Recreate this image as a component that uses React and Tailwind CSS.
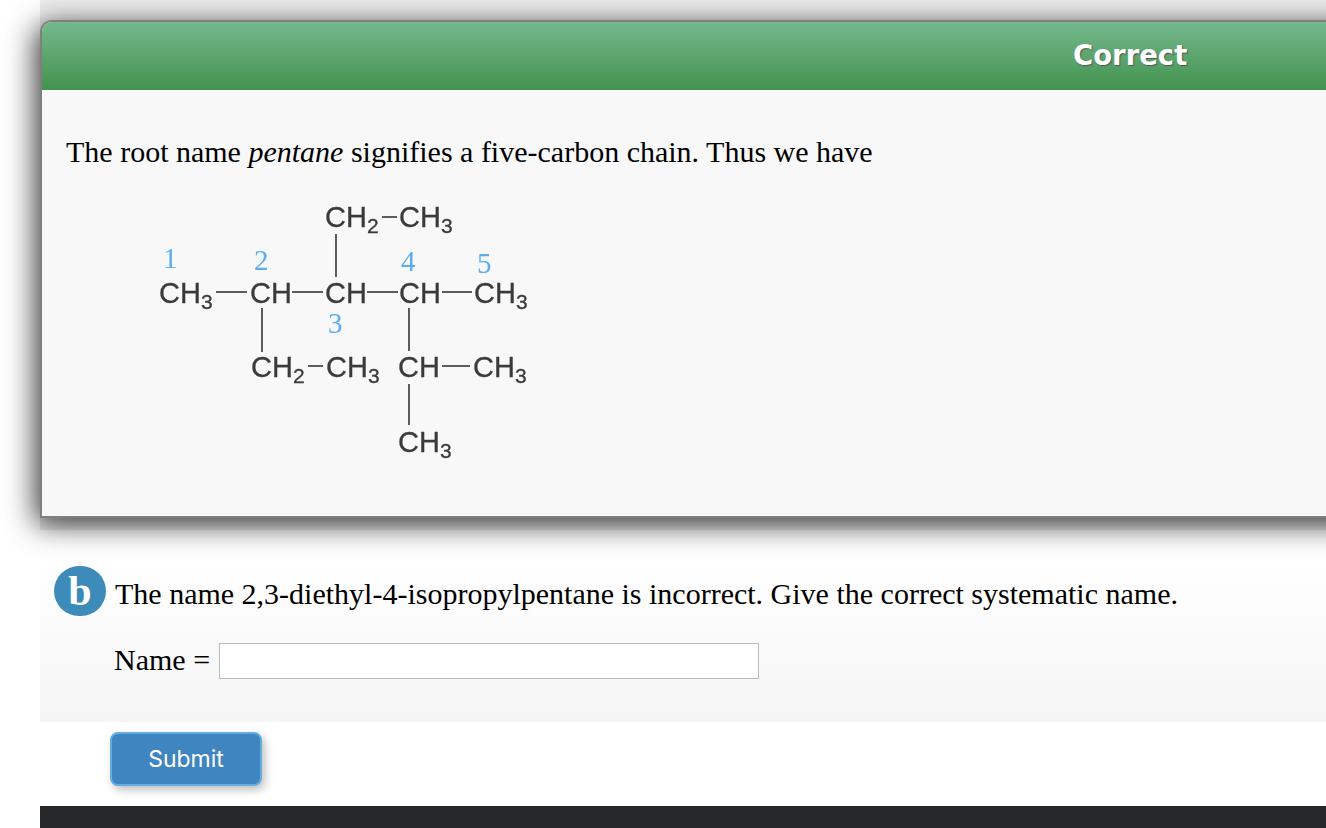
import React from "react";

const serif = { fontFamily: '"Liberation Serif", serif' };

function Chem({ x, y, sub, children }) {
  return (
    <text
      x={x}
      y={y}
      fontSize="29"
      fill="#3a3a3a"
      stroke="#3a3a3a"
      strokeWidth="0.3"
      fontFamily="Liberation Sans, sans-serif"
    >
      {children}
      {sub ? (
        <tspan fontSize="21" dy="6">
          {sub}
        </tspan>
      ) : null}
    </text>
  );
}

function Num({ x, y, children }) {
  return (
    <text x={x} y={y} fontSize="29" fill="#58aef5" fontFamily="Liberation Serif, serif">
      {children}
    </text>
  );
}

// the structure formula from the worked solution
function Formula() {
  const bonds = [
    [76, 100, 107, 100],
    [152, 100, 183, 100],
    [227, 100, 258, 100],
    [302, 100, 332, 100],
    [242, 25, 257, 25],
    [168, 174, 183, 174],
    [302, 174, 330, 174],
    [196, 42, 196, 85],
    [122, 116, 122, 160],
    [269, 116, 269, 159],
    [269, 192, 269, 233],
  ];
  return (
    <svg width="400" height="275" viewBox="0 0 400 275" className="block blur-[0.4px]">
      {bonds.map((b, i) => (
        <line key={i} x1={b[0]} y1={b[1]} x2={b[2]} y2={b[3]} stroke="#4a4a4a" strokeWidth="1.8" />
      ))}
      <Chem x={185} y={35} sub="2">CH</Chem>
      <Chem x={259} y={35} sub="3">CH</Chem>
      <Chem x={19} y={111} sub="3">CH</Chem>
      <Chem x={110} y={111}>CH</Chem>
      <Chem x={185} y={111}>CH</Chem>
      <Chem x={259} y={111}>CH</Chem>
      <Chem x={334} y={111} sub="3">CH</Chem>
      <Chem x={111} y={185} sub="2">CH</Chem>
      <Chem x={186} y={185} sub="3">CH</Chem>
      <Chem x={258} y={185}>CH</Chem>
      <Chem x={333} y={185} sub="3">CH</Chem>
      <Chem x={258} y={260} sub="3">CH</Chem>
      <Num x={23} y={76}>1</Num>
      <Num x={114} y={78}>2</Num>
      <Num x={261} y={79}>4</Num>
      <Num x={337} y={81}>5</Num>
      <Num x={188} y={141}>3</Num>
    </svg>
  );
}

export default function App() {
  return (
    <div className="h-[828px] w-full overflow-hidden bg-white text-black" style={serif}>
      {/* solution panel */}
      <div className="ml-10 h-[530px] bg-[#ededed] pt-5">
        <div className="w-[1400px] h-[498px] rounded-tl-xl border-t-2 border-l-2 border-b-2 border-[#808080] bg-[#f8f8f8] shadow-[-4px_6px_30px_rgba(0,0,0,0.8)]">
          <div className="h-[68px] rounded-tl-[10px] bg-gradient-to-b from-[#74b88c] to-[#43934f] pl-[1031px] pt-[15px]">
            <span
              className="text-[27.5px] leading-9 font-bold text-white [text-shadow:1px_1px_1px_#555]"
              style={{ fontFamily: '"DejaVu Sans", sans-serif' }}
            >
              Correct
            </span>
          </div>
          <p className="pt-[44px] pl-6 text-[30px] leading-9">
            The root name <i>pentane</i> signifies a five-carbon chain. Thus we have
          </p>
          <div className="ml-[98px] mt-[22px]">
            <Formula />
          </div>
        </div>
      </div>

      {/* part b */}
      <div className="relative ml-10 mt-[30px] h-[162px] bg-gradient-to-b from-white to-[#f5f5f5] pt-[6px]">
        <div className="flex items-center">
          <span className="ml-[14px] flex h-[50px] w-[52px] items-center justify-center rounded-full bg-[#3d8bb9] text-[42px] font-bold text-white">
            b
          </span>
          <span className="ml-[9px] pt-[6px] text-[30px] leading-9">
            The name 2,3-diethyl-4-isopropylpentane is incorrect. Give the correct systematic name.
          </span>
        </div>
        <div className="mt-[25px] flex items-center">
          <span className="ml-[74px] text-[30px] leading-9">Name =</span>
          <input type="text" className="ml-[9px] mt-[2px] h-9 w-[540px] border border-[#bbb] bg-white" />
        </div>
      </div>

      <button
        className="ml-[110px] mt-[10px] block h-[54px] w-[152px] rounded-lg border-2 border-[#64aede] bg-[#3f85bf] text-[23px] text-white shadow-[3px_4px_8px_rgba(0,0,0,0.25)]"
        style={{ fontFamily: "Inter, sans-serif" }}
      >
        Submit
      </button>

      <div className="ml-10 mt-5 h-[22px] bg-[#27282a]"></div>
    </div>
  );
}
